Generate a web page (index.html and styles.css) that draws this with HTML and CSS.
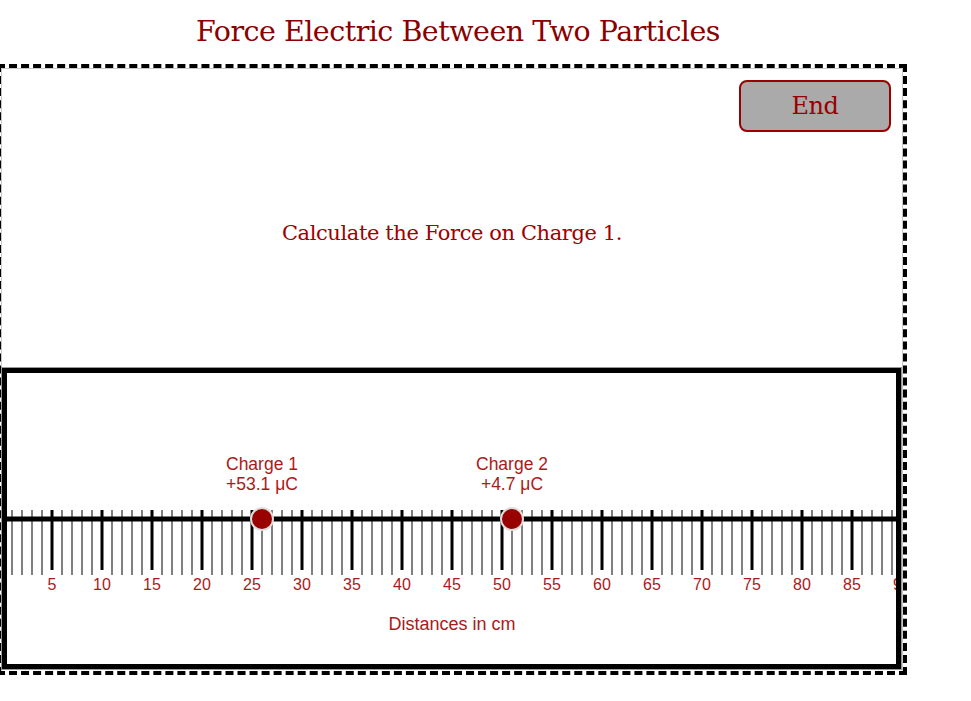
FILE: index.html
```html
<!DOCTYPE html>
<html>
<head>
<meta charset="utf-8">
<link rel="stylesheet" href="styles.css">
</head>
<body>
<div class="title"><h1>Force Electric Between Two Particles</h1></div>
<div class="frame">
  <div class="inner">
    <div class="top">
      <button class="end">End</button>
      <p class="prompt">Calculate the Force on Charge 1.</p>
    </div>
    <div class="ruler">
      <svg width="889" height="291" viewBox="0 0 889 291" xmlns="http://www.w3.org/2000/svg">
        <defs>
          <pattern id="minor" patternUnits="userSpaceOnUse" x="0" y="0" width="50" height="291">
            <rect x="4" y="137" width="2" height="65" fill="#808080"/>
            <rect x="14" y="137" width="2" height="65" fill="#808080"/>
            <rect x="24" y="137" width="2" height="65" fill="#808080"/>
            <rect x="34" y="137" width="2" height="65" fill="#808080"/>
          </pattern>
          <pattern id="major" patternUnits="userSpaceOnUse" x="0" y="0" width="50" height="291">
            <rect x="43.5" y="137" width="3" height="60" fill="#000"/>
          </pattern>
        </defs>
        <rect x="0" y="0" width="889" height="291" fill="url(#minor)"/>
        <rect x="0" y="0" width="889" height="291" fill="url(#major)"/>
        <rect x="0" y="143.5" width="889" height="5" fill="#000"/>
        <g class="nums">
          <text x="45" y="217">5</text>
          <text x="95" y="217">10</text>
          <text x="145" y="217">15</text>
          <text x="195" y="217">20</text>
          <text x="245" y="217">25</text>
          <text x="295" y="217">30</text>
          <text x="345" y="217">35</text>
          <text x="395" y="217">40</text>
          <text x="445" y="217">45</text>
          <text x="495" y="217">50</text>
          <text x="545" y="217">55</text>
          <text x="595" y="217">60</text>
          <text x="645" y="217">65</text>
          <text x="695" y="217">70</text>
          <text x="745" y="217">75</text>
          <text x="795" y="217">80</text>
          <text x="845" y="217">85</text>
          <text x="895" y="217">90</text>
        </g>
        <text class="axis" x="445" y="257">Distances in cm</text>
        <g class="charge">
          <text x="255" y="97">Charge 1</text>
          <text x="255" y="117">+53.1 μC</text>
          <circle cx="255" cy="146" r="11" fill="#990000" stroke="#dddddd" stroke-width="2"/>
        </g>
        <g class="charge">
          <text x="505" y="97">Charge 2</text>
          <text x="505" y="117">+4.7 μC</text>
          <circle cx="505" cy="146" r="11" fill="#990000" stroke="#dddddd" stroke-width="2"/>
        </g>
      </svg>
    </div>
  </div>
</div>
</body>
</html>
```
FILE: styles.css
```css
html, body {
  margin: 0;
  padding: 0;
  background: #fff;
}
body {
  font-family: "Liberation Serif", serif;
  width: 971px;
  height: 701px;
  overflow: hidden;
}
.title {
  width: 916px;
  height: 64px;
  box-sizing: border-box;
  padding-top: 14px;
  text-align: center;
}
.title h1 {
  margin: 0;
  font-family: "DejaVu Serif", serif;
  font-weight: normal;
  font-size: 28.5px;
  line-height: 36px;
  color: #8b0000;
  letter-spacing: -0.5px;
}
.frame {
  margin-left: -3px;
  width: 902px;
  height: 603px;
  border: 4px dashed #000;
}
.inner {
  box-sizing: border-box;
  width: 902px;
  height: 603px;
  border: 1px solid #c8c8c8;
  border-bottom: none;
  display: flex;
  flex-direction: column;
}
.top {
  height: 299px;
  display: flex;
  flex-direction: column;
  align-items: center;
}
.end {
  align-self: flex-end;
  margin: 11px 11px 0 0;
  width: 152px;
  height: 52px;
  background: #aaaaaa;
  border: 2px solid #990000;
  border-radius: 8px;
  color: #990000;
  font-family: "DejaVu Serif", serif;
  font-size: 24px;
  padding: 0;
  letter-spacing: -0.5px;
}
.prompt {
  margin: 88px 0 0 0;
  font-family: "DejaVu Serif", serif;
  font-size: 21px;
  line-height: 26px;
  color: #a00000;
  letter-spacing: -0.4px;
}
.ruler {
  width: 889px;
  height: 291px;
  border: 5px solid #000;
  box-shadow: 0 0 0 1px #999;
  overflow: hidden;
}
.ruler svg {
  display: block;
}
.ruler text {
  font-family: "Liberation Sans", Arial, sans-serif;
  fill: #aa1a1a;
  text-anchor: middle;
}
.nums text {
  font-size: 16px;
}
.axis {
  font-size: 18px;
}
.charge text {
  font-size: 17.5px;
}
```
